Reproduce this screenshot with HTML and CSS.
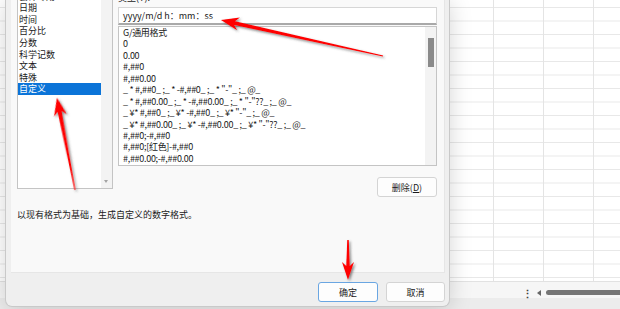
FILE: index.html
```html
<!DOCTYPE html>
<html lang="zh-CN">
<head>
    <meta charset="UTF-8">
    <meta name="viewport" content="width=device-width, initial-scale=1.0">
    <title>设置单元格格式 - 自定义</title>
    <link rel="stylesheet" href="styles.css">
</head>
<body>

    <!-- Feuille de calcul en arrière-plan -->
    <div class="sheet">
        <div class="grid"></div>
        <div class="sheet-bar">
            <span class="more">⋮</span>
            <span class="scroll-left"></span>
            <span class="scroll-thumb"></span>
        </div>
    </div>

    <div class="dialog">
        <div class="panel">
            <div class="top-row">
                <div class="category-list">
                    <ul>
                        <li>会计专用</li>
                        <li>日期</li>
                        <li>时间</li>
                        <li>百分比</li>
                        <li>分数</li>
                        <li>科学记数</li>
                        <li>文本</li>
                        <li>特殊</li>
                        <li class="selected">自定义</li>
                    </ul>
                    <div class="vscroll"><span class="arrow-down"></span></div>
                </div>

                <div class="type-box">
                    <div class="type-label">类型(T):</div>
                    <div class="type-input">yyyy/m/d h：mm：ss</div>
                    <div class="format-list">
                        <ul>
                            <li>G/通用格式</li>
                            <li>0</li>
                            <li>0.00</li>
                            <li>#,##0</li>
                            <li>#,##0.00</li>
                            <li>_ * #,##0_ ;_ * -#,##0_ ;_ * "-"_ ;_ @_</li>
                            <li>_ * #,##0.00_ ;_ * -#,##0.00_ ;_ * "-"??_ ;_ @_</li>
                            <li>_ ¥* #,##0_ ;_ ¥* -#,##0_ ;_ ¥* "-"_ ;_ @_</li>
                            <li>_ ¥* #,##0.00_ ;_ ¥* -#,##0.00_ ;_ ¥* "-"??_ ;_ @_</li>
                            <li>#,##0;-#,##0</li>
                            <li>#,##0;[红色]-#,##0</li>
                            <li>#,##0.00;-#,##0.00</li>
                        </ul>
                        <div class="vscroll"><span class="thumb"></span></div>
                    </div>
                    <div class="delete-row">
                        <button class="btn">删除(<u>D</u>)</button>
                    </div>
                </div>
            </div>

            <p class="desc">以现有格式为基础，生成自定义的数字格式。</p>
        </div>

        <div class="footer">
            <button class="btn primary">确定</button>
            <button class="btn cancel">取消</button>
        </div>
    </div>

    <!-- Flèches rouges d'annotation -->
    <svg class="arrows" width="620" height="309" viewBox="0 0 620 309">
        <defs>
            <filter id="shade" x="-20%" y="-20%" width="140%" height="140%">
                <feDropShadow dx="1.5" dy="1.5" stdDeviation="1.1" flood-color="#444" flood-opacity="0.65"/>
            </filter>
        </defs>
        <g filter="url(#shade)" fill="#ff0000">
            <polygon transform="translate(383 56) rotate(-167.47)"
                     points="0,-0.6 152,-1.9 148,-6.5 166,0 148,6.5 152,1.9 0,0.6"/>
            <polygon transform="translate(75 190) rotate(-101.07)"
                     points="0,-0.6 80,-1.9 76,-6.5 94,0 76,6.5 80,1.9 0,0.6"/>
            <polygon transform="translate(348 240) rotate(90)"
                     points="0,-0.7 26,-1.8 22,-6 40,0 22,6 26,1.8 0,0.7"/>
        </g>
    </svg>

</body>
</html>
```

FILE: styles.css
```css
* {
    box-sizing: border-box;
}

body {
    margin: 0;
    width: 620px;
    height: 309px;
    overflow: hidden;
    position: relative;
    font-family: "Noto Sans CJK SC", "Noto Sans", sans-serif;
    font-size: 9px;
    color: #1a1a1a;
    background: #fff;
}

/* Feuille de calcul */
.sheet {
    display: flex;
    flex-direction: column;
    height: 309px;
}

.grid {
    height: 281px;
    background-color: #fff;
    background-image:
        linear-gradient(to right, #e4e4e4 1px, transparent 1px),
        linear-gradient(to bottom, #e8e8e8 1px, transparent 1px);
    background-size: 50px 100%, 100% 13.5px;
    background-position: 43px 0, 0 7px;
}

.sheet-bar {
    flex: 1;
    display: flex;
    align-items: center;
    padding: 0 0 6px 522px;
    background: linear-gradient(to bottom, #f6f6f6 0, #f6f6f6 60%, #ececec 60%);
    border-top: 1px solid #e2e2e2;
}

.more {
    font-size: 11px;
    font-weight: bold;
    color: #444;
    width: 12px;
}

.scroll-left {
    width: 0;
    height: 0;
    border-top: 3px solid transparent;
    border-bottom: 3px solid transparent;
    border-right: 4px solid #666;
    margin-left: 3px;
}

.scroll-thumb {
    flex: 1;
    height: 5px;
    margin-left: 5px;
    border-radius: 3px 0 0 3px;
    background: #757575;
}

/* Boîte de dialogue */
.dialog {
    position: absolute;
    left: 5px;
    top: 0;
    width: 445px;
    height: 307px;
    display: flex;
    flex-direction: column;
    background: #efefef;
    border: 1px solid #c9c9c9;
    border-top: none;
    border-radius: 0 0 7px 7px;
    box-shadow: 0 2px 22px rgba(0, 0, 0, 0.17);
    overflow: hidden;
}

.panel {
    margin: -14px 4px 0 5px;
    height: 287px;
    padding: 0 7px 0 6px;
    display: flex;
    flex-direction: column;
    background: #f9f9f9;
    border-right: 1px solid #e6e6e6;
    border-bottom: 1px solid #e6e6e6;
}

.top-row {
    display: flex;
    align-items: flex-start;
    gap: 5px;
}

ul {
    margin: 0;
    padding: 0;
    list-style: none;
    flex: 1;
    overflow: hidden;
}

li {
    white-space: nowrap;
}

.category-list {
    width: 96px;
    height: 203px;
    display: flex;
    background: #fff;
    border: 1px solid #c4c4c4;
}

.category-list ul {
    padding-top: 3.6px;
}

.category-list li {
    height: 11.6px;
    line-height: 11.6px;
    padding-left: 1px;
}

.category-list li.selected {
    background: #0b74d8;
    color: #fff;
}

.vscroll {
    width: 11px;
    position: relative;
    background: #f3f3f3;
}

.arrow-down {
    position: absolute;
    left: 3px;
    bottom: 5px;
    width: 0;
    height: 0;
    border-left: 2.5px solid transparent;
    border-right: 2.5px solid transparent;
    border-top: 3px solid #a3a3a3;
}

.type-box {
    flex: 1;
    display: flex;
    flex-direction: column;
}

.type-label {
    margin-top: 5px;
    height: 14px;
    line-height: 14px;
}

.type-input {
    margin-top: 2px;
    height: 18px;
    padding-left: 4px;
    line-height: 15px;
    background: #fff;
    border: 1px solid #d6d6d6;
    border-bottom: 2px solid #a9a9a9;
}

.format-list {
    margin-top: 1px;
    height: 140px;
    display: flex;
    background: #fff;
    border: 1px solid #c4c4c4;
}

.format-list li {
    height: 11.45px;
    line-height: 11.45px;
    padding-left: 4px;
    letter-spacing: -0.3px;
}

.thumb {
    position: absolute;
    top: 11px;
    left: 2.5px;
    width: 6px;
    height: 29px;
    background: #8a8a8a;
}

.delete-row {
    margin-top: 11px;
    display: flex;
    justify-content: flex-end;
}

.btn {
    width: 60px;
    height: 20px;
    padding: 0;
    font-family: inherit;
    font-size: 9px;
    color: #1a1a1a;
    background: #fdfdfd;
    border: 1px solid #d4d4d4;
    border-radius: 3px;
}

.desc {
    margin: 11px 0 0 0;
    line-height: 14px;
}

.footer {
    flex: 1;
    display: flex;
    justify-content: flex-end;
    align-items: flex-start;
    gap: 8px;
    padding: 9px 4px 0 0;
}

.btn.primary {
    border-color: #6aa6e2;
}

.btn.cancel {
    width: 59px;
}

/* Annotations */
.arrows {
    position: absolute;
    left: 0;
    top: 0;
    pointer-events: none;
}
```
